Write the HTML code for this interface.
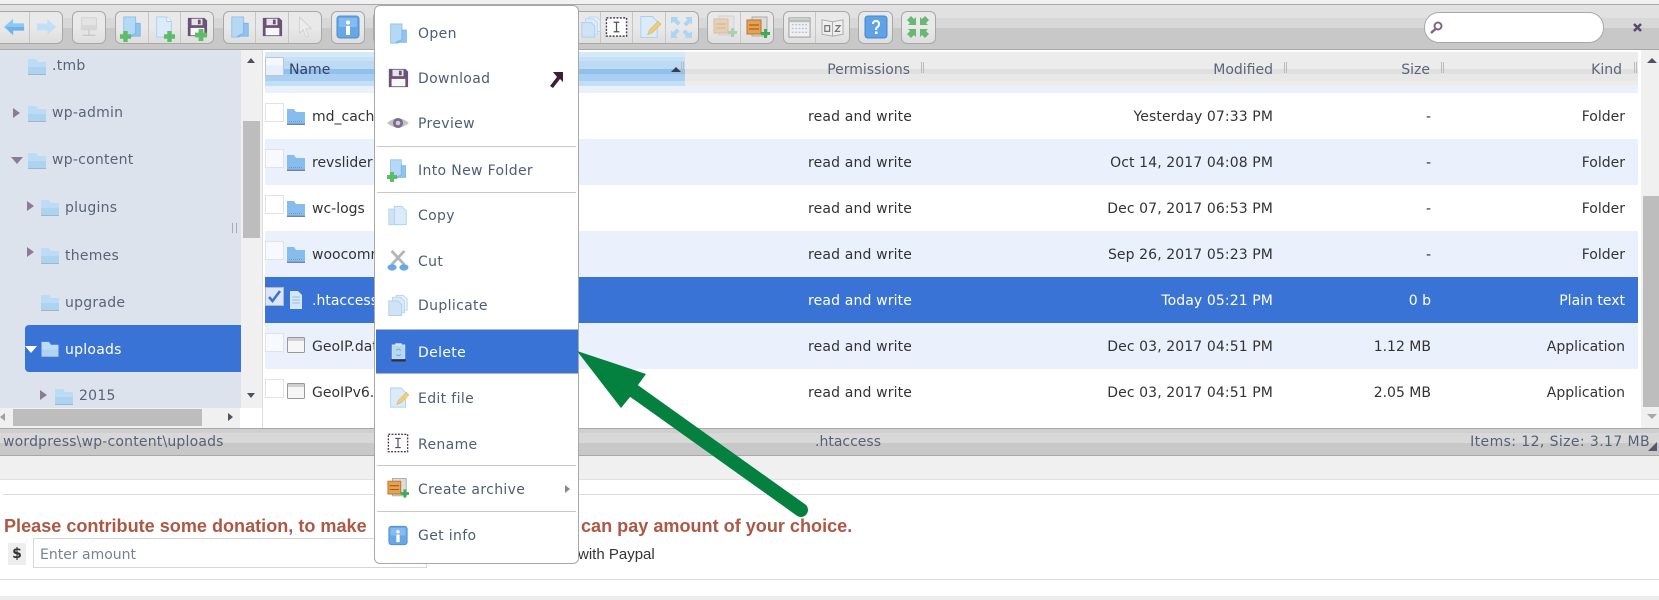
<!DOCTYPE html>
<html><head><meta charset="utf-8"><title>elFinder</title>
<style>
html,body{margin:0;padding:0;background:#fff}
#p{position:relative;width:1659px;height:600px;overflow:hidden;background:#fff;font-family:"DejaVu Sans","Liberation Sans",sans-serif;font-size:14px;color:#333}
#p div,#p span,#p svg{position:absolute}
#p svg{overflow:visible}
.t{white-space:nowrap;line-height:20px;height:20px}
.g{top:11px;height:31px;border:1px solid #a8a8a8;border-radius:6px;background:linear-gradient(#e9e9e9,#e9e9e9 50%,#dedede)}
.s{top:12px;height:31px;width:1px;background:#c6c6c6}
.tr{color:#5a6478;letter-spacing:.25px}
.ar{width:0;height:0;border-style:solid;border-color:transparent transparent transparent #8c7b96;border-width:5px 0 5px 7px}
.cb{left:265px;width:17px;height:17px;border:1px solid #e2e2e2;background:#fff}
.alt .cb{background:#f7f9fe}
.row{left:265px;width:1373px;height:46px}
.alt{background:#eaf1fc}
.m{color:#505c76;left:418px;letter-spacing:.35px}
.sep{left:377px;width:199px;height:1px;background:#c8c8c8}
.h{color:#5c6479}
.hd{width:3px;height:11px;top:62px;border-left:1px solid #bbb;border-right:1px solid #bbb;box-sizing:border-box}
.pm{left:808px;letter-spacing:.15px}
.dt{right:386px;letter-spacing:.1px}
.don{font-family:'Liberation Sans',sans-serif;font-weight:bold;font-size:18.080px;color:#ad5844}
</style></head><body>
<div id="p">
<svg width="0" height="0" style="left:0;top:0">
<defs>
<symbol id="tf" viewBox="0 0 18 18"><path d="M0 2h8l2 3h8v13H0z" fill="#bcdcf5"/><path d="M0 10h18v7H0z" fill="#aed3f1"/><path d="M0 17h18v1H0z" fill="#9fb5cb"/></symbol>
<symbol id="ff" viewBox="0 0 18 17"><path d="M0 1h7l2 3h9v13H0z" fill="#86bcee"/><path d="M0 15.6h18V17H0z" fill="#7d7fa0"/><path d="M2 13.5h14" stroke="#5f9bd6" stroke-dasharray="1 1"/></symbol>
<symbol id="op" viewBox="0 0 24 24"><path d="M3 1h13v19l-5 3H3z" fill="#b5d8f5" stroke="#8cc0ee"/><path d="M16 8h5v14H9l7-3z" fill="#8fc3f0" stroke="#7db4e6"/></symbol>
<symbol id="pl" viewBox="0 0 10 10"><path d="M3 0h4v3h3v4H7v3H3V7H0V3h3z" fill="#5dbb6a"/></symbol>
<symbol id="fl" viewBox="0 0 24 24"><path d="M2 2h18l3 3v17H2z" fill="#6b5378"/><path d="M6 3h12v7H6z" fill="#e7e4ea"/><path d="M13 4h3v5h-3z" fill="#6b5378"/><path d="M5 13h15v8H5z" fill="#f8f8f8"/></symbol>
<symbol id="ey" viewBox="0 0 24 24"><path d="M0 12Q12 2 24 12 12 22 0 12z" fill="#c2c2c2"/><circle cx="12" cy="12" r="5.5" fill="#7d6c88"/><circle cx="12" cy="12" r="2.5" fill="#cfcfdc"/></symbol>
<symbol id="dc" viewBox="0 0 24 24"><path d="M4 1h11l5 5v17H4z" fill="#dcebf9" stroke="#a8cff0"/><path d="M15 1v5h5" fill="#f2f8fe" stroke="#a8cff0"/></symbol>
<symbol id="cp" viewBox="0 0 24 24"><path d="M2 5h9l3 3v14H2z" fill="#cfe3f5" stroke="#b3d4ee"/><path d="M8 2h8l5 5v15H8z" fill="#dcebf9" stroke="#a8cff0"/></symbol>
<symbol id="du" viewBox="0 0 24 24"><path d="M10 1h8l4 4v12H10z" fill="#e9f2fa" stroke="#b7d6ef"/><path d="M6 3h9l4 4v13H6z" fill="#dcebf9" stroke="#b7d6ef"/><path d="M2 7h10l4 4v12H2z" fill="#cfe3f5" stroke="#a8cff0"/></symbol>
<symbol id="sc" viewBox="0 0 24 24"><path d="M5 1l14 15M19 1L5 16" stroke="#b2b4ba" stroke-width="3"/><ellipse cx="5.500" cy="19" rx="5" ry="3.500" fill="#66a9e4"/><ellipse cx="18.500" cy="19" rx="5" ry="3.500" fill="#66a9e4"/></symbol>
<symbol id="tr" viewBox="0 0 24 24"><path d="M4 3h16v18H4z" fill="#b7d8f4" stroke="#cfe3f5"/><path d="M8 1h8v3H8z" fill="#d9e8f5"/><path d="M9 10l3-2 3 2M9 15l3 2 3-2" stroke="#5f9de0" fill="none"/><path d="M3 21h18v3H3z" fill="#2c3243"/></symbol>
<symbol id="ed" viewBox="0 0 24 24"><path d="M3 1h12l5 5v17H3z" fill="#dcebf9" stroke="#a8cff0"/><path d="M10 20l2-5 9-9 3 3-9 9z" fill="#f0ce79" stroke="#d8b25d" stroke-width=".6"/></symbol>
<symbol id="rn" viewBox="0 0 24 24"><rect x="1.500" y="2.500" width="21" height="19" fill="#fff" stroke="#4e3a60" stroke-width="1.500" stroke-dasharray="2 1.500"/><path d="M9 7h6M9 17h6M12 7v10" stroke="#4e4e62" stroke-width="1.300"/></symbol>
<symbol id="ar" viewBox="0 0 24 24"><path d="M6 1h15v19H6z" fill="#dcdcdc" stroke="#a9a9a9"/><path d="M1 4h14v14H1z" fill="#e6a251" stroke="#b8742c"/><path d="M3 9h10M3 13h10" stroke="#93521b"/><path d="M15 16h3v-3h3v3h3v3h-3v3h-3v-3h-3z" fill="#3eaa52"/></symbol>
<symbol id="in" viewBox="0 0 24 24"><rect x="1" y="1" width="22" height="22" rx="3" fill="#67a7e6" stroke="#4b8ed6"/><rect x="3" y="3" width="18" height="9" fill="#85bbee"/><circle cx="12" cy="7.500" r="2" fill="#fff"/><path d="M10 11h4v9h-4z" fill="#fff"/></symbol>
<symbol id="bk" viewBox="0 0 24 24"><path d="M1 12L11 3v5h12v8H11v5z" fill="#8cc8f2"/><path d="M3 12h20v4H11v5z" fill="#6db2ea"/></symbol>
<symbol id="fw" viewBox="0 0 24 24"><path d="M23 12L13 3v5H1v8h12v5z" fill="#bfe0f7"/></symbol>
<symbol id="nt" viewBox="0 0 24 24"><path d="M4 2h16v13H4z" fill="#e4e4e4" stroke="#cfcfcf"/><path d="M3 10h18v5H3z" fill="#d6d6d6"/><path d="M12 15v6M5 21h14" stroke="#c8c8c8" stroke-width="1.500"/></symbol>
<symbol id="cu" viewBox="0 0 24 24"><path d="M6 1l13 13h-6l3 8-3 1-3-8-4 4z" fill="#ececec" stroke="#d2d2d2"/></symbol>
<symbol id="rs" viewBox="0 0 24 24"><path d="M1 1h8L7 3l4 4-3 3-4-4-3 2zM23 1v8l-2-2-4 4-3-3 4-4-2-3zM1 23v-8l2 2 4-4 3 3-4 4 2 3zM23 23h-8l2-2-4-4 3-3 4 4 3-2z" fill="#acd5f4"/></symbol>
<symbol id="fs" viewBox="0 0 24 24"><path d="M10 10H2l2-2-3-3 4-4 3 3 2-2zM14 10h8l-2-2 3-3-4-4-3 3-2-2zM10 14H2l2 2-3 3 4 4 3-3 2 2zM14 14h8l-2 2 3 3-4 4-3-3-2 2z" fill="#66b873"/></symbol>
<symbol id="gr" viewBox="0 0 24 24"><rect x="1" y="2" width="22" height="20" fill="#f0f0f0" stroke="#999"/><path d="M1 5h22" stroke="#bbb" stroke-width="3"/><path d="M4 9h16M4 13h16M4 17h16" stroke="#b8c4dd" stroke-width="1.500" stroke-dasharray="2 1.500"/></symbol>
<symbol id="az" viewBox="0 0 24 24"><path d="M1 4l11 2 11-2v15l-11 2-11-2z" fill="#efefef" stroke="#aaa"/><path d="M12 6v15" stroke="#aaa"/><path d="M4 10h5v6H4zM15 10h5l-5 6h5" fill="none" stroke="#777" stroke-width="1.300"/></symbol>
<symbol id="hp" viewBox="0 0 24 24"><rect x="1" y="1" width="22" height="22" rx="3" fill="#5fa3e6" stroke="#3f85d4"/><path d="M9 9q0-3 3-3t3 3q0 2-1.500 3-1.500 1-1.500 3" fill="none" stroke="#fff" stroke-width="2"/><rect x="11" y="16.500" width="2.500" height="2.500" fill="#fff"/></symbol>
</defs></svg>

<!-- toolbar -->
<div style="left:0;top:0;width:1659px;height:4px;background:#f1f1f1"></div>
<div style="left:0;top:4px;width:1659px;height:46px;box-sizing:border-box;border-top:1px solid #a8a8a8;border-bottom:1px solid #a8a8a8;background:linear-gradient(#e1e1e1,#e1e1e1 13px,#d8d8d8 13px,#d8d8d8 23px,#c8c8c8 23px)"></div>

<div class="g" style="left:-6px;width:67px"></div><div class="s" style="left:29px"></div>
<div class="g" style="left:72px;width:32px"></div>
<div class="g" style="left:115px;width:97px"></div><div class="s" style="left:148px"></div><div class="s" style="left:180px"></div>
<div class="g" style="left:223px;width:97px"></div><div class="s" style="left:255px"></div><div class="s" style="left:288px"></div>
<div class="g" style="left:331px;width:32px"></div>
<div class="g" style="left:373px;width:324px"></div><div class="s" style="left:600px"></div><div class="s" style="left:632px"></div><div class="s" style="left:665px"></div>
<div class="g" style="left:707px;width:65px"></div><div class="s" style="left:740px"></div>
<div class="g" style="left:783px;width:65px"></div><div class="s" style="left:815px"></div>
<div class="g" style="left:858px;width:33px"></div>
<div class="g" style="left:901px;width:33px"></div>

<svg style="left:3px;top:16px" width="22" height="22"><use href="#bk"/></svg>
<svg style="left:36px;top:16px" width="21" height="22"><use href="#fw"/></svg>
<svg style="left:78px;top:15px" width="22" height="24"><use href="#nt"/></svg>
<svg style="left:121px;top:15px" width="22" height="24"><use href="#op"/></svg><svg style="left:120px;top:31px" width="11" height="11"><use href="#pl"/></svg>
<svg style="left:153px;top:15px" width="22" height="24"><use href="#dc"/></svg><svg style="left:164px;top:31px" width="11" height="11"><use href="#pl"/></svg>
<svg style="left:186px;top:15px" width="22" height="24"><use href="#fl"/></svg><svg style="left:195px;top:29px" width="12" height="12"><use href="#pl"/></svg>
<svg style="left:229px;top:15px" width="22" height="24"><use href="#op"/></svg>
<svg style="left:261px;top:15px" width="22" height="24"><use href="#fl"/></svg>
<svg style="left:294px;top:15px" width="22" height="24"><use href="#cu"/></svg>
<svg style="left:336px;top:15px" width="24" height="24"><use href="#in"/></svg>
<svg style="left:580px;top:15px" width="22" height="24"><use href="#du"/></svg>
<svg style="left:605px;top:15px" width="23" height="24"><use href="#rn"/></svg>
<svg style="left:638px;top:15px" width="23" height="24"><use href="#ed"/></svg>
<svg style="left:670px;top:16px" width="23" height="23"><use href="#rs"/></svg>
<svg style="left:713px;top:15px;opacity:.35" width="24" height="24"><use href="#ar"/></svg>
<svg style="left:746px;top:15px" width="24" height="26"><use href="#ar"/></svg>
<svg style="left:788px;top:16px" width="23" height="23"><use href="#gr"/></svg>
<svg style="left:821px;top:16px" width="23" height="23"><use href="#az"/></svg>
<svg style="left:864px;top:15px" width="24" height="24"><use href="#hp"/></svg>
<svg style="left:906px;top:15px" width="24" height="24"><use href="#fs"/></svg>

<div style="left:1424px;top:12px;width:178px;height:29px;border:1px solid #a8a8a8;border-radius:15px;background:#fff"></div>
<svg style="left:1430px;top:21px" width="13" height="13" viewBox="0 0 13 13"><circle cx="8" cy="5" r="3.500" fill="none" stroke="#7d6589" stroke-width="2"/><path d="M5.500 8L1 12" stroke="#7d6589" stroke-width="2.500"/></svg>
<svg style="left:1633px;top:23px" width="9" height="9" viewBox="0 0 9 9"><path d="M1 1l7 7M8 1L1 8" stroke="#5b4b67" stroke-width="2.600"/></svg>

<!-- tree -->
<div style="left:0;top:50px;width:241px;height:358px;background:#dde3ec"></div>
<div style="left:25px;top:325px;width:216px;height:47px;background:#3973d6;border-radius:4px 0 0 4px"></div>
<svg style="left:28px;top:57px" width="18" height="18"><use href="#tf"/></svg><div class="t tr" style="left:52px;top:56px">.tmb</div>
<div class="ar" style="left:13px;top:108px"></div><svg style="left:28px;top:104px" width="18" height="18"><use href="#tf"/></svg><div class="t tr" style="left:52px;top:103px">wp-admin</div>
<div class="ar" style="left:11px;top:157px;border-width:7px 6px 0 6px;border-color:#8c7b96 transparent transparent transparent"></div><svg style="left:28px;top:151px" width="18" height="18"><use href="#tf"/></svg><div class="t tr" style="left:52px;top:150px">wp-content</div>
<div class="ar" style="left:27px;top:201px"></div><svg style="left:41px;top:198px" width="18" height="18"><use href="#tf"/></svg><div class="t tr" style="left:65px;top:198px">plugins</div>
<div class="ar" style="left:27px;top:247px"></div><svg style="left:41px;top:246px" width="18" height="18"><use href="#tf"/></svg><div class="t tr" style="left:65px;top:246px">themes</div>
<svg style="left:41px;top:293px" width="18" height="18"><use href="#tf"/></svg><div class="t tr" style="left:65px;top:293px">upgrade</div>
<div class="ar" style="left:25px;top:346px;border-width:7px 6px 0 6px;border-color:#fff transparent transparent transparent"></div><svg style="left:41px;top:340px" width="18" height="17"><use href="#tf"/></svg><div class="t" style="left:65px;top:340px;color:#fff;letter-spacing:.25px">uploads</div>
<div class="ar" style="left:40px;top:390px"></div><svg style="left:55px;top:387px" width="18" height="18"><use href="#tf"/></svg><div class="t tr" style="left:79px;top:386px;height:22px;overflow:hidden">2015</div>
<div style="left:232px;top:223px;width:3px;height:10px;border-left:1px solid #aab;border-right:1px solid #aab"></div>

<!-- tree scrollbars -->
<div style="left:241px;top:50px;width:21px;height:358px;background:#f0f0f0"></div>
<div style="left:243px;top:121px;width:17px;height:117px;background:#bdbdbd"></div>
<div class="ar" style="left:247px;top:58px;border-width:0 4px 5px 4px;border-color:transparent transparent #505064 transparent"></div>
<div class="ar" style="left:247px;top:393px;border-width:5px 4px 0 4px;border-color:#505064 transparent transparent transparent"></div>
<div style="left:0;top:408px;width:240px;height:20px;background:#f0f0f0"></div>
<div style="left:13px;top:409px;width:189px;height:17px;background:#bdbdbd"></div>
<div class="ar" style="left:0;top:413px;border-width:4px 5px 4px 0;border-color:transparent #a0a0a0 transparent transparent"></div>
<div class="ar" style="left:228px;top:413px;border-width:4px 0 4px 5px;border-color:transparent transparent transparent #505064"></div>
<div style="left:262px;top:50px;width:1px;height:378px;background:#dcdcdc"></div>

<!-- list header -->
<div style="left:265px;top:52px;width:1373px;height:34px;background:linear-gradient(#ececec,#ececec 17px,#e0e0e0 17px,#e0e0e0 22px,#e8e8e8 22px,#e8e8e8 29px,#ececec 29px)"></div>
<div style="left:265px;top:52px;width:420px;height:34px;background:linear-gradient(#d6e9f9,#d6e9f9 5px,#c8e0f6 5px,#c8e0f6 9px,#bcdaf4 9px,#bcdaf4 17px,#8fc1ec 17px,#8fc1ec 22px,#a9d0f2 22px,#a9d0f2 29px,#c3dff6 29px)"></div>
<div style="left:265px;top:86px;width:1373px;height:7px;background:#eaf1fc"></div>
<div class="cb" style="top:57px;border-color:#c4c4c4;background:linear-gradient(#f4f7fb,#f4f7fb 45%,#e6effb 45%)"></div>
<div class="t" style="left:289px;top:60px;color:#3c3f63">Name</div>
<div class="ar" style="left:671px;top:67px;border-width:0 5px 5px 5px;border-color:transparent transparent #3c3a52 transparent"></div>
<div class="hd" style="left:681px"></div>
<div class="t h" style="right:749px;top:60px">Permissions</div><div class="hd" style="left:921px"></div>
<div class="t h" style="right:386px;top:60px">Modified</div><div class="hd" style="left:1284px"></div>
<div class="t h" style="right:229px;top:60px">Size</div><div class="hd" style="left:1441px"></div>
<div class="t h" style="right:37px;top:60px">Kind</div><div class="hd" style="left:1634px"></div>

<!-- rows -->
<div class="row" style="top:139px;background:#eaf1fc"></div>
<div class="row" style="top:231px;background:#eaf1fc"></div>
<div class="row" style="top:277px;background:#3973d6"></div>
<div class="row" style="top:323px;background:#eaf1fc"></div>

<div class="cb" style="top:103px"></div><svg style="left:287px;top:108px" width="18" height="17"><use href="#ff"/></svg><div class="t" style="left:312px;top:107px">md_cache</div>
<div class="cb" style="top:149px;background:#f7f9fe"></div><svg style="left:287px;top:154px" width="18" height="17"><use href="#ff"/></svg><div class="t" style="left:312px;top:153px">revslider</div>
<div class="cb" style="top:195px"></div><svg style="left:287px;top:200px" width="18" height="17"><use href="#ff"/></svg><div class="t" style="left:312px;top:199px">wc-logs</div>
<div class="cb" style="top:241px;background:#f7f9fe"></div><svg style="left:287px;top:246px" width="18" height="17"><use href="#ff"/></svg><div class="t" style="left:312px;top:245px">woocommerce</div>
<div class="cb" style="top:287px;background:#dbe6f6;border-color:#b0b8c8"></div>
<svg style="left:267px;top:290px" width="15" height="13" viewBox="0 0 15 13"><path d="M2 7l3.500 4L13 1" fill="none" stroke="#3973d6" stroke-width="2.500"/></svg>
<svg style="left:288px;top:291px" width="16" height="18" viewBox="0 0 16 18"><path d="M2 0h8l4 4v14H2z" fill="#d5e6f7"/><path d="M4 6h8M4 9h8M4 12h8" stroke="#9dbfe0"/></svg>
<div class="t" style="left:312px;top:291px;color:#fff">.htaccess</div>
<div class="cb" style="top:333px;background:#f7f9fe"></div>
<svg style="left:287px;top:337px" width="18" height="17" viewBox="0 0 18 17"><rect x=".5" y=".5" width="17" height="15" rx="1" fill="#f6f6f6" stroke="#999"/><path d="M1 1h16v3H1z" fill="#d0d0d0"/></svg>
<div class="t" style="left:312px;top:337px">GeoIP.dat</div>
<div class="cb" style="top:379px"></div>
<svg style="left:287px;top:383px" width="18" height="17" viewBox="0 0 18 17"><rect x=".5" y=".5" width="17" height="15" rx="1" fill="#f6f6f6" stroke="#999"/><path d="M1 1h16v3H1z" fill="#d0d0d0"/></svg>
<div class="t" style="left:312px;top:383px">GeoIPv6.dat</div>

<div class="t pm" style="top:107px">read and write</div>
<div class="t pm" style="top:153px">read and write</div>
<div class="t pm" style="top:199px">read and write</div>
<div class="t pm" style="top:245px">read and write</div>
<div class="t pm" style="top:291px;color:#fff">read and write</div>
<div class="t pm" style="top:337px">read and write</div>
<div class="t pm" style="top:383px">read and write</div>

<div class="t dt" style="top:107px">Yesterday 07:33 PM</div>
<div class="t dt" style="top:153px">Oct 14, 2017 04:08 PM</div>
<div class="t dt" style="top:199px">Dec 07, 2017 06:53 PM</div>
<div class="t dt" style="top:245px">Sep 26, 2017 05:23 PM</div>
<div class="t dt" style="top:291px;color:#fff">Today 05:21 PM</div>
<div class="t dt" style="top:337px">Dec 03, 2017 04:51 PM</div>
<div class="t dt" style="top:383px">Dec 03, 2017 04:51 PM</div>

<div class="t" style="right:228px;top:107px">-</div>
<div class="t" style="right:228px;top:153px">-</div>
<div class="t" style="right:228px;top:199px">-</div>
<div class="t" style="right:228px;top:245px">-</div>
<div class="t" style="right:228px;top:291px;color:#fff">0 b</div>
<div class="t" style="right:228px;top:337px">1.12 MB</div>
<div class="t" style="right:228px;top:383px">2.05 MB</div>

<div class="t" style="right:34px;top:107px">Folder</div>
<div class="t" style="right:34px;top:153px">Folder</div>
<div class="t" style="right:34px;top:199px">Folder</div>
<div class="t" style="right:34px;top:245px">Folder</div>
<div class="t" style="right:34px;top:291px;color:#fff">Plain text</div>
<div class="t" style="right:34px;top:337px">Application</div>
<div class="t" style="right:34px;top:383px">Application</div>

<!-- right scrollbar -->
<div style="left:1641px;top:50px;width:18px;height:378px;background:#f0f0f0"></div>
<div style="left:1643px;top:196px;width:16px;height:211px;background:#bdbdbd"></div>
<div class="ar" style="left:1647px;top:58px;border-width:0 5px 5px 5px;border-color:transparent transparent #505064 transparent"></div>
<div class="ar" style="left:1647px;top:414px;border-width:5px 5px 0 5px;border-color:#a8a8a8 transparent transparent transparent"></div>

<!-- status bar -->
<div style="left:0;top:428px;width:1659px;height:28px;box-sizing:border-box;border-top:1px solid #a8a8a8;border-bottom:1px solid #a8a8a8;background:linear-gradient(#cfcfcf,#cfcfcf 4px,#d8d8d8 4px,#d8d8d8 14px,#c8c8c8 14px)"></div>
<div class="t" style="left:3px;top:432px;color:#586078;letter-spacing:.19px">wordpress\wp-content\uploads</div>
<div class="t" style="left:815px;top:432px;color:#586078">.htaccess</div>
<div class="t" style="right:9px;top:432px;color:#586078;letter-spacing:.4px">Items: 12, Size: 3.17 MB</div>
<svg style="left:1648px;top:442px" width="9" height="9" viewBox="0 0 9 9"><path d="M0 9L9 0v9z" fill="#5b5570"/></svg>

<!-- bottom -->
<div style="left:0;top:456px;width:1659px;height:23px;background:#f0f0f0"></div>
<div style="left:0;top:479px;width:1659px;height:1px;background:#e2e2e2"></div>
<div style="left:3px;top:494px;width:1656px;height:1px;background:#dcdcdc"></div>
<div class="t don" style="left:4px;top:516px">Please contribute some donation, to make</div>
<div class="t don" style="left:581px;top:516px">can pay amount of your choice.</div>
<div class="t" style="left:8px;top:543px;width:18px;height:22px;background:#eee;text-align:center;line-height:22px;font-weight:bold;color:#333">$</div>
<div style="left:33px;top:538px;width:392px;height:28px;border:1px solid #d8d8d8;background:#fff"></div>
<div class="t" style="left:40px;top:545px;color:#7a7f92">Enter amount</div>
<div class="t" style="left:578px;top:545px;color:#333;font-family:'Liberation Sans',sans-serif;font-size:15px">with Paypal</div>
<div style="left:0;top:579px;width:1659px;height:1px;background:#dcdcdc"></div>
<div style="left:0;top:596px;width:1659px;height:4px;background:#ececec"></div>

<!-- context menu -->
<div style="left:374px;top:5px;width:203px;height:557px;border:1px solid #a8a8a8;border-radius:6px;background:#fff"></div>
<div style="left:376px;top:329px;width:202px;height:45px;background:#3973d6;border-top:1px solid #b5b5b5;border-bottom:1px solid #b5b5b5;box-sizing:border-box"></div>
<svg style="left:388px;top:22px" width="21" height="23"><use href="#op"/></svg><div class="t m" style="top:24px">Open</div>
<svg style="left:387px;top:67px" width="22" height="22"><use href="#fl"/></svg><div class="t m" style="top:69px">Download</div>
<svg style="left:387px;top:112px" width="22" height="22"><use href="#ey"/></svg><div class="t m" style="top:114px">Preview</div>
<div class="sep" style="top:146px"></div>
<svg style="left:388px;top:158px" width="20" height="22"><use href="#op"/></svg><svg style="left:387px;top:172px" width="10" height="10"><use href="#pl"/></svg><div class="t m" style="top:161px">Into New Folder</div>
<div class="sep" style="top:192px"></div>
<svg style="left:387px;top:204px" width="22" height="23"><use href="#cp"/></svg><div class="t m" style="top:206px">Copy</div>
<svg style="left:387px;top:250px" width="22" height="22"><use href="#sc"/></svg><div class="t m" style="top:252px">Cut</div>
<svg style="left:387px;top:294px" width="22" height="23"><use href="#du"/></svg><div class="t m" style="top:296px">Duplicate</div>
<svg style="left:389px;top:341px" width="19" height="22"><use href="#tr"/></svg><div class="t m" style="top:343px;color:#fff">Delete</div>
<svg style="left:388px;top:386px" width="21" height="23"><use href="#ed"/></svg><div class="t m" style="top:389px">Edit file</div>
<svg style="left:387px;top:432px" width="22" height="22"><use href="#rn"/></svg><div class="t m" style="top:435px">Rename</div>
<div class="sep" style="top:465px"></div>
<svg style="left:387px;top:477px" width="22" height="23"><use href="#ar"/></svg><div class="t m" style="top:480px">Create archive</div>
<div class="ar" style="left:565px;top:485px;border-width:4px 0 4px 5px;border-color:transparent transparent transparent #8d80a0"></div>
<div class="sep" style="top:511px"></div>
<svg style="left:388px;top:525px" width="20" height="21"><use href="#in"/></svg><div class="t m" style="top:526px">Get info</div>

<!-- black cursor arrow -->
<svg style="left:548px;top:69px" width="16" height="20" viewBox="0 0 16 20"><path d="M5 3h10v10l-3-3-7 9-3-2 7-9z" fill="#3a2035"/></svg>

<!-- green annotation arrow -->
<svg style="left:0;top:0" width="1659" height="600" viewBox="0 0 1659 600"><path d="M634 391L801 510" stroke="#04803f" stroke-width="14" stroke-linecap="round" fill="none"/><path d="M577 351L646 374 638 385 630 397 621 408z" fill="#04803f"/></svg>
</div>
</body></html>
